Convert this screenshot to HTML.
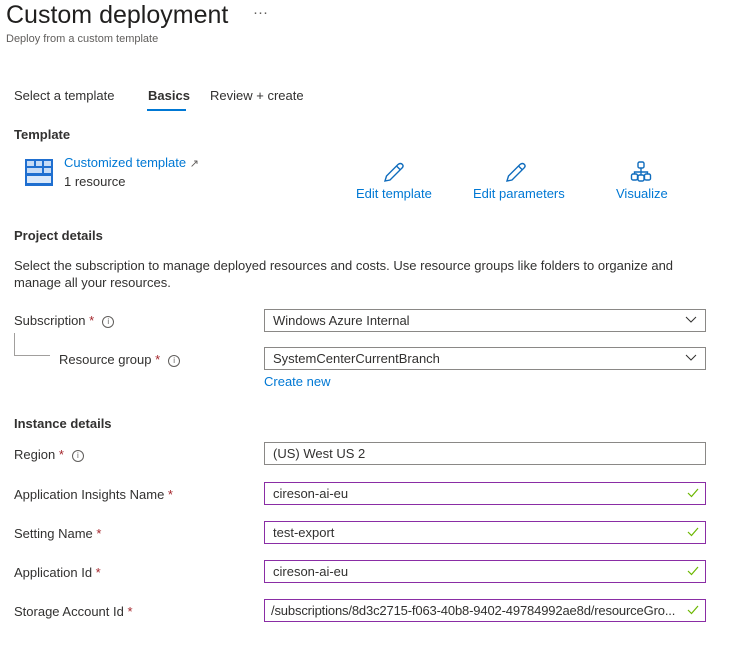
<!DOCTYPE html>
<html><head><style>
body{margin:0;width:729px;height:658px;background:#fff;font-family:"Liberation Sans",sans-serif;color:#323130;position:relative;overflow:hidden}
.a{position:absolute;white-space:nowrap}
.t{font-size:13px}
.h{font-size:13px;font-weight:bold}
.lnk{color:#0078d4}
.req{color:#a4262c}
.info{display:inline-block;width:10px;height:10px;border:1px solid #605e5c;border-radius:50%;font-size:8px;line-height:10px;text-align:center;color:#605e5c;vertical-align:1px;margin-left:8px}
.box{position:absolute;left:264px;height:21px;border:1px solid #8a8886;font-size:13px;line-height:21px;padding-left:8px;box-sizing:content-box;width:432px}
.ok{border-color:#8a2da5}
.chk{position:absolute;right:6px;top:5px}
.dd{position:absolute;right:8px;top:6px}
</style></head><body>
<div class="a" style="left:6px;top:1px;font-size:25px;color:#201f1e">Custom deployment</div>
<div class="a" style="left:253px;top:4px;font-size:15px;color:#605e5c">···</div>
<div class="a" style="left:6px;top:33px;font-size:11px;color:#605e5c">Deploy from a custom template</div>
<div class="a t" style="left:14px;top:88px">Select a template</div>
<div class="a t" style="left:148px;top:88px;font-weight:bold">Basics</div>
<div class="a" style="left:147px;top:109px;width:39px;height:2px;background:#0078d4"></div>
<div class="a t" style="left:210px;top:88px">Review + create</div>
<div class="a h" style="left:14px;top:127px">Template</div>
<svg class="a" style="left:25px;top:159px" width="28" height="27"><rect x="0" y="0" width="28" height="27" fill="#1f6fd0"/><g fill="#c7dcf6"><rect x="2" y="2" width="7" height="5"/><rect x="11" y="2" width="6" height="5"/><rect x="19" y="2" width="7" height="5"/><rect x="2" y="9" width="15" height="5"/><rect x="19" y="9" width="7" height="5"/><rect x="2" y="17" width="24" height="7" fill="#dbe9fa"/></g></svg>
<div class="a t lnk" style="left:64px;top:155px">Customized template <span style="color:#605e5c;font-size:11px">↗</span></div>
<div class="a t" style="left:64px;top:174px">1 resource</div>
<svg class="a" style="left:383px;top:161px" width="22" height="22" fill="none" stroke="#0f6cbd" stroke-width="1.4"><path d="M2 20 L3.5 15 L15 3.5 Q17.5 1.5 19.5 3.5 Q21 5.5 18.5 7.5 L7 19 Z M13.5 5 L17 8.5"/></svg>
<div class="a t lnk" style="left:356px;top:186px">Edit template</div>
<svg class="a" style="left:505px;top:161px" width="22" height="22" fill="none" stroke="#0f6cbd" stroke-width="1.4"><path d="M2 20 L3.5 15 L15 3.5 Q17.5 1.5 19.5 3.5 Q21 5.5 18.5 7.5 L7 19 Z M13.5 5 L17 8.5"/></svg>
<div class="a t lnk" style="left:473px;top:186px">Edit parameters</div>
<svg class="a" style="left:630px;top:161px" width="22" height="22" fill="none" stroke="#0f6cbd" stroke-width="1.4"><rect x="8" y="1" width="6" height="6" rx="1.5"/><path d="M11 7 V11 M4.5 13 V11 H17.5 V13 M11 11 V14"/><rect x="1.5" y="13" width="6" height="6" rx="1.5"/><rect x="8" y="14" width="6" height="6" rx="1.5"/><rect x="14.5" y="13" width="6" height="6" rx="1.5"/></svg>
<div class="a t lnk" style="left:616px;top:186px">Visualize</div>
<div class="a h" style="left:14px;top:228px">Project details</div>
<div class="a t" style="left:14px;top:257px;line-height:17px">Select the subscription to manage deployed resources and costs. Use resource groups like folders to organize and<br>manage all your resources.</div>
<div class="a t" style="left:14px;top:313px">Subscription <span class="req">*</span><span class="info">i</span></div>
<div class="a" style="left:14px;top:333px;width:1px;height:22px;background:#a19f9d"></div>
<div class="a" style="left:14px;top:355px;width:36px;height:1px;background:#a19f9d"></div>
<div class="a t" style="left:59px;top:352px">Resource group <span class="req">*</span><span class="info">i</span></div>
<div class="box" style="top:309px">Windows Azure Internal<svg class="dd" width="12" height="8" fill="none" stroke="#323130"><path d="M1 1 L6 6 L11 1"/></svg></div>
<div class="box" style="top:347px">SystemCenterCurrentBranch<svg class="dd" width="12" height="8" fill="none" stroke="#323130"><path d="M1 1 L6 6 L11 1"/></svg></div>
<div class="a t lnk" style="left:264px;top:374px">Create new</div>
<div class="a h" style="left:14px;top:416px">Instance details</div>
<div class="a t" style="left:14px;top:447px">Region <span class="req">*</span><span class="info">i</span></div>
<div class="box" style="top:442px">(US) West US 2</div>
<div class="a t" style="left:14px;top:487px">Application Insights Name <span class="req">*</span></div>
<div class="box ok" style="top:482px">cireson-ai-eu<svg class="chk" width="12" height="10" fill="none" stroke="#6bb700" stroke-width="1.2"><path d="M1 5 L4.5 8.5 L11 1"/></svg></div>
<div class="a t" style="left:14px;top:526px">Setting Name <span class="req">*</span></div>
<div class="box ok" style="top:521px">test-export<svg class="chk" width="12" height="10" fill="none" stroke="#6bb700" stroke-width="1.2"><path d="M1 5 L4.5 8.5 L11 1"/></svg></div>
<div class="a t" style="left:14px;top:565px">Application Id <span class="req">*</span></div>
<div class="box ok" style="top:560px">cireson-ai-eu<svg class="chk" width="12" height="10" fill="none" stroke="#6bb700" stroke-width="1.2"><path d="M1 5 L4.5 8.5 L11 1"/></svg></div>
<div class="a t" style="left:14px;top:604px">Storage Account Id <span class="req">*</span></div>
<div class="box ok" style="top:599px;padding-left:6px;width:434px;letter-spacing:-0.15px">/subscriptions/8d3c2715-f063-40b8-9402-49784992ae8d/resourceGro...<svg class="chk" width="12" height="10" fill="none" stroke="#6bb700" stroke-width="1.2"><path d="M1 5 L4.5 8.5 L11 1"/></svg></div>
</body></html>
